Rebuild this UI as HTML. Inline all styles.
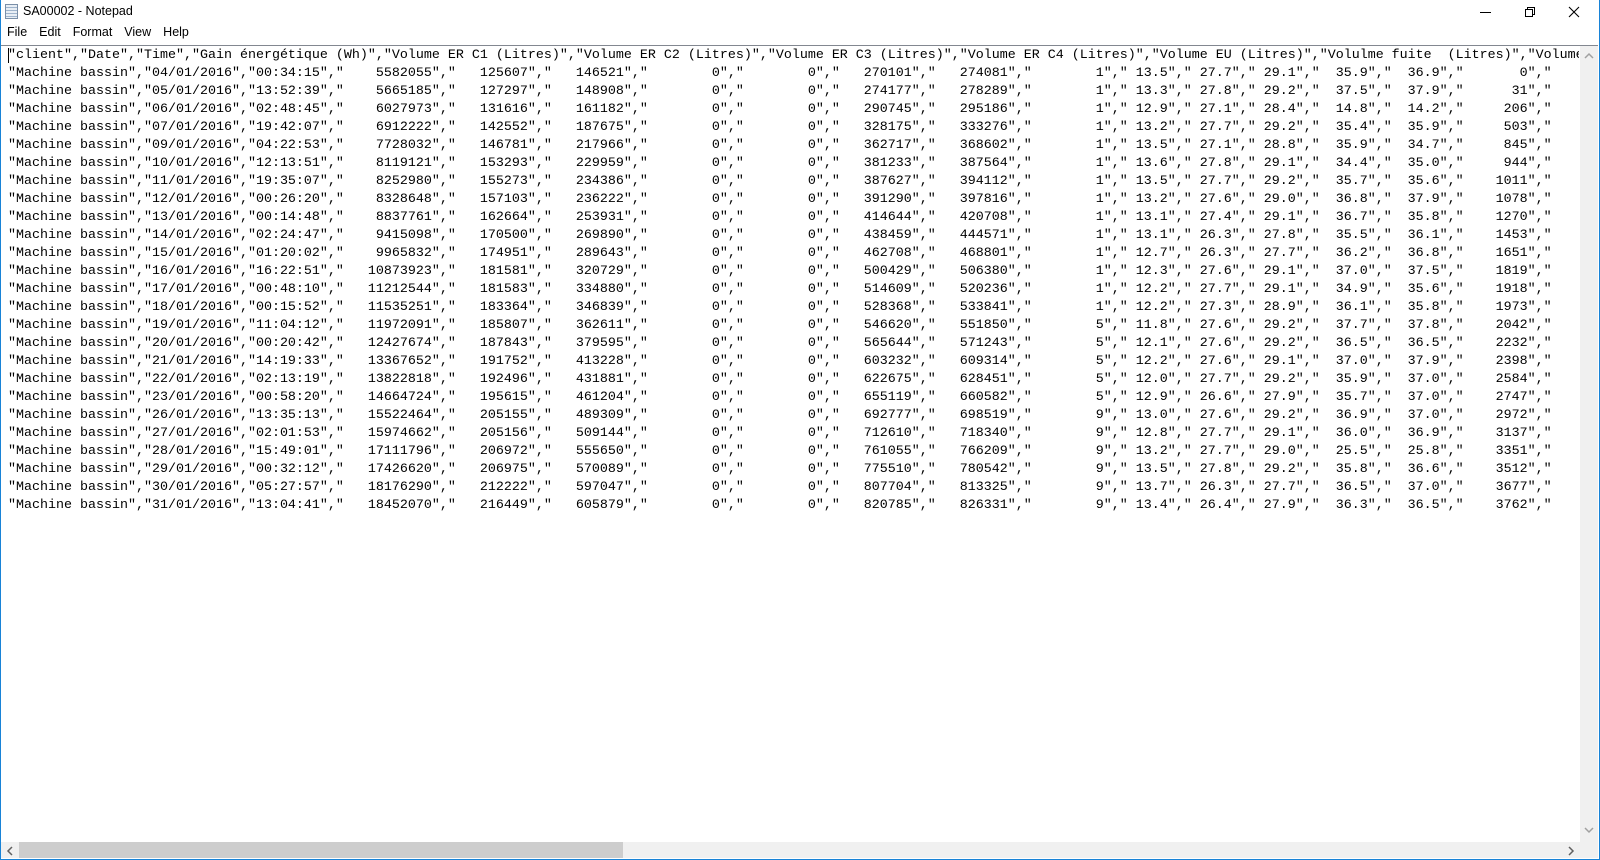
<!DOCTYPE html>
<html><head><meta charset="utf-8"><style>
*{margin:0;padding:0;box-sizing:border-box}
body{width:1600px;height:860px;overflow:hidden;background:#fff;position:relative;font-family:"Liberation Sans",sans-serif}
.win{position:absolute;left:0;top:0;width:1600px;height:860px;border-left:1px solid #1883d7;border-right:1px solid #1883d7;border-bottom:1px solid #1883d7}
.title{position:absolute;left:23px;top:4px;font-size:12.5px;color:#000}
.ticon{position:absolute;left:5px;top:4px;width:13px;height:15px;border:1px solid #7a8fa8;background:repeating-linear-gradient(#e8eef5 0 2px,#9fb4cc 2px 3px)}
.menu{position:absolute;top:25px;left:7px;font-size:12.5px;color:#000}
.menu span{margin-right:12px}
.edit{position:absolute;left:1px;top:45px;width:1597px;height:814px;border-top:1px solid #828790}
pre{position:absolute;left:7px;top:1px;width:1571px;overflow:hidden;font-family:"Liberation Mono",monospace;font-size:13.33px;line-height:18px;color:#000;white-space:pre}
.vs{position:absolute;left:1580px;top:46px;width:18px;height:796px;background:#f0f0f0}
.hs{position:absolute;left:1px;top:842px;width:1579px;height:16px;background:#f0f0f0}
.thumb{position:absolute;left:19px;top:842px;width:604px;height:16px;background:#cdcdcd}
.corner{position:absolute;left:1580px;top:842px;width:18px;height:16px;background:#f0f0f0}
.caret{position:absolute;left:8px;top:48px;width:1px;height:15px;background:#000}
</style></head><body>
<div class="win"></div>
<div class="ticon"></div>
<div class="title">SA00002 - Notepad</div>
<svg style="position:absolute;left:1478px;top:4px" width="110" height="16">
<line x1="2" y1="8.5" x2="13" y2="8.5" stroke="#000"/>
<rect x="47.5" y="5.5" width="7" height="7" fill="none" stroke="#000"/>
<path d="M49.5 5.5V3.5H56.5V10.5H54.5" fill="none" stroke="#000"/>
<path d="M91 3L101 13M101 3L91 13" stroke="#000" stroke-width="1.1"/>
</svg>
<div class="menu"><span>File</span><span>Edit</span><span>Format</span><span>View</span><span>Help</span></div>
<div class="edit"><pre>"client","Date","Time","Gain énergétique (Wh)","Volume ER C1 (Litres)","Volume ER C2 (Litres)","Volume ER C3 (Litres)","Volume ER C4 (Litres)","Volume EU (Litres)","Volulme fuite  (Litres)","Volume
"Machine bassin","04/01/2016","00:34:15","    5582055","   125607","   146521","        0","        0","   270101","   274081","        1"," 13.5"," 27.7"," 29.1","  35.9","  36.9","       0","
"Machine bassin","05/01/2016","13:52:39","    5665185","   127297","   148908","        0","        0","   274177","   278289","        1"," 13.3"," 27.8"," 29.2","  37.5","  37.9","      31","
"Machine bassin","06/01/2016","02:48:45","    6027973","   131616","   161182","        0","        0","   290745","   295186","        1"," 12.9"," 27.1"," 28.4","  14.8","  14.2","     206","
"Machine bassin","07/01/2016","19:42:07","    6912222","   142552","   187675","        0","        0","   328175","   333276","        1"," 13.2"," 27.7"," 29.2","  35.4","  35.9","     503","
"Machine bassin","09/01/2016","04:22:53","    7728032","   146781","   217966","        0","        0","   362717","   368602","        1"," 13.5"," 27.1"," 28.8","  35.9","  34.7","     845","
"Machine bassin","10/01/2016","12:13:51","    8119121","   153293","   229959","        0","        0","   381233","   387564","        1"," 13.6"," 27.8"," 29.1","  34.4","  35.0","     944","
"Machine bassin","11/01/2016","19:35:07","    8252980","   155273","   234386","        0","        0","   387627","   394112","        1"," 13.5"," 27.7"," 29.2","  35.7","  35.6","    1011","
"Machine bassin","12/01/2016","00:26:20","    8328648","   157103","   236222","        0","        0","   391290","   397816","        1"," 13.2"," 27.6"," 29.0","  36.8","  37.9","    1078","
"Machine bassin","13/01/2016","00:14:48","    8837761","   162664","   253931","        0","        0","   414644","   420708","        1"," 13.1"," 27.4"," 29.1","  36.7","  35.8","    1270","
"Machine bassin","14/01/2016","02:24:47","    9415098","   170500","   269890","        0","        0","   438459","   444571","        1"," 13.1"," 26.3"," 27.8","  35.5","  36.1","    1453","
"Machine bassin","15/01/2016","01:20:02","    9965832","   174951","   289643","        0","        0","   462708","   468801","        1"," 12.7"," 26.3"," 27.7","  36.2","  36.8","    1651","
"Machine bassin","16/01/2016","16:22:51","   10873923","   181581","   320729","        0","        0","   500429","   506380","        1"," 12.3"," 27.6"," 29.1","  37.0","  37.5","    1819","
"Machine bassin","17/01/2016","00:48:10","   11212544","   181583","   334880","        0","        0","   514609","   520236","        1"," 12.2"," 27.7"," 29.1","  34.9","  35.6","    1918","
"Machine bassin","18/01/2016","00:15:52","   11535251","   183364","   346839","        0","        0","   528368","   533841","        1"," 12.2"," 27.3"," 28.9","  36.1","  35.8","    1973","
"Machine bassin","19/01/2016","11:04:12","   11972091","   185807","   362611","        0","        0","   546620","   551850","        5"," 11.8"," 27.6"," 29.2","  37.7","  37.8","    2042","
"Machine bassin","20/01/2016","00:20:42","   12427674","   187843","   379595","        0","        0","   565644","   571243","        5"," 12.1"," 27.6"," 29.2","  36.5","  36.5","    2232","
"Machine bassin","21/01/2016","14:19:33","   13367652","   191752","   413228","        0","        0","   603232","   609314","        5"," 12.2"," 27.6"," 29.1","  37.0","  37.9","    2398","
"Machine bassin","22/01/2016","02:13:19","   13822818","   192496","   431881","        0","        0","   622675","   628451","        5"," 12.0"," 27.7"," 29.2","  35.9","  37.0","    2584","
"Machine bassin","23/01/2016","00:58:20","   14664724","   195615","   461204","        0","        0","   655119","   660582","        5"," 12.9"," 26.6"," 27.9","  35.7","  37.0","    2747","
"Machine bassin","26/01/2016","13:35:13","   15522464","   205155","   489309","        0","        0","   692777","   698519","        9"," 13.0"," 27.6"," 29.2","  36.9","  37.0","    2972","
"Machine bassin","27/01/2016","02:01:53","   15974662","   205156","   509144","        0","        0","   712610","   718340","        9"," 12.8"," 27.7"," 29.1","  36.0","  36.9","    3137","
"Machine bassin","28/01/2016","15:49:01","   17111796","   206972","   555650","        0","        0","   761055","   766209","        9"," 13.2"," 27.7"," 29.0","  25.5","  25.8","    3351","
"Machine bassin","29/01/2016","00:32:12","   17426620","   206975","   570089","        0","        0","   775510","   780542","        9"," 13.5"," 27.8"," 29.2","  35.8","  36.6","    3512","
"Machine bassin","30/01/2016","05:27:57","   18176290","   212222","   597047","        0","        0","   807704","   813325","        9"," 13.7"," 26.3"," 27.7","  36.5","  37.0","    3677","
"Machine bassin","31/01/2016","13:04:41","   18452070","   216449","   605879","        0","        0","   820785","   826331","        9"," 13.4"," 26.4"," 27.9","  36.3","  36.5","    3762","</pre></div>
<div class="caret"></div>
<div class="vs">
<svg style="position:absolute;left:4px;top:6px" width="10" height="8"><path d="M1 6L5 2L9 6" fill="none" stroke="#a0a0a0" stroke-width="1.5"/></svg>
<svg style="position:absolute;left:4px;top:780px" width="10" height="8"><path d="M1 2L5 6L9 2" fill="none" stroke="#a0a0a0" stroke-width="1.5"/></svg>
</div>
<div class="hs">
<svg style="position:absolute;left:5px;top:4px" width="8" height="10"><path d="M6 1L2 5L6 9" fill="none" stroke="#606060" stroke-width="1.5"/></svg>
<svg style="position:absolute;left:1566px;top:4px" width="8" height="10"><path d="M2 1L6 5L2 9" fill="none" stroke="#606060" stroke-width="1.5"/></svg>
</div>
<div class="thumb"></div>
<div class="corner"></div>
</body></html>
